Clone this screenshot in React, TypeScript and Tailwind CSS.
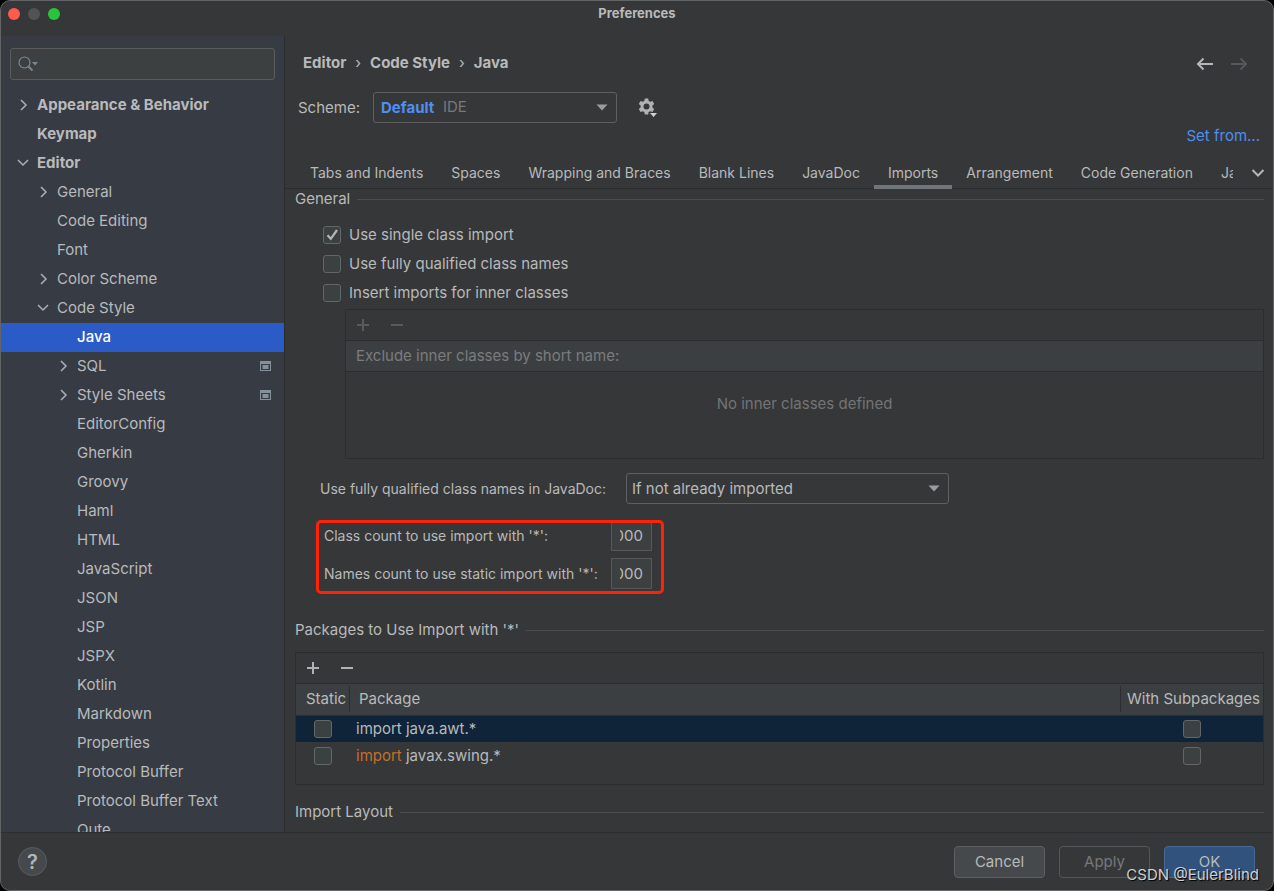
import React, { useState } from 'react';

type TreeItem = {
    title: string;
    level: 0 | 1 | 2;
    state?: 'open' | 'closed';
    project?: boolean;
}

const tree: TreeItem[] = [
    { title: 'Appearance & Behavior', level: 0, state: 'closed' },
    { title: 'Keymap', level: 0 },
    { title: 'Editor', level: 0, state: 'open' },
    { title: 'General', level: 1, state: 'closed' },
    { title: 'Code Editing', level: 1 },
    { title: 'Font', level: 1 },
    { title: 'Color Scheme', level: 1, state: 'closed' },
    { title: 'Code Style', level: 1, state: 'open' },
    { title: 'Java', level: 2 },
    { title: 'SQL', level: 2, state: 'closed', project: true },
    { title: 'Style Sheets', level: 2, state: 'closed', project: true },
    { title: 'EditorConfig', level: 2 },
    { title: 'Gherkin', level: 2 },
    { title: 'Groovy', level: 2 },
    { title: 'Haml', level: 2 },
    { title: 'HTML', level: 2 },
    { title: 'JavaScript', level: 2 },
    { title: 'JSON', level: 2 },
    { title: 'JSP', level: 2 },
    { title: 'JSPX', level: 2 },
    { title: 'Kotlin', level: 2 },
    { title: 'Markdown', level: 2 },
    { title: 'Properties', level: 2 },
    { title: 'Protocol Buffer', level: 2 },
    { title: 'Protocol Buffer Text', level: 2 },
    { title: 'Qute', level: 2 },
];

const indents = ['pl-[15px]', 'pl-[35px]', 'pl-[55px]'];

const tabs = [
    'Tabs and Indents',
    'Spaces',
    'Wrapping and Braces',
    'Blank Lines',
    'JavaDoc',
    'Imports',
    'Arrangement',
    'Code Generation',
    'Java EE Names',
];

const packages = [
    { name: 'java.awt.*', selected: true },
    { name: 'javax.swing.*', selected: false },
];

const Chevron = ({ open }: { open?: boolean }) => (
    <svg width="14" height="14" viewBox="0 0 14 14" fill="none" stroke="#adb0b3" strokeWidth="1.5">
        <path d={open ? 'M2 4 L7 9 L12 4' : 'M5 2 L10 7 L5 12'}/>
    </svg>
);

const Caret = () => (
    <svg className="pointer-events-none absolute right-[9px] top-3" width="12" height="7" viewBox="0 0 12 7">
        <path d="M0.5 0.5h11L6 6.5z" fill="#9a9da0"/>
    </svg>
);

const Plus = () => (
    <svg width="14" height="14" viewBox="0 0 14 14" fill="none" stroke="currentColor" strokeWidth="2">
        <path d="M7 1v12M1 7h12"/>
    </svg>
);

const Minus = () => (
    <svg width="14" height="14" viewBox="0 0 14 14" fill="none" stroke="currentColor" strokeWidth="2">
        <path d="M1 7h12"/>
    </svg>
);

const ProjectIcon = () => (
    <svg width="11" height="10" viewBox="0 0 11 10">
        <path d="M0 0h11v10H0zM1 3v6h9V3z" fill="#84909a" fillRule="evenodd"/>
        <path d="M2.500 4h6v4h-6z" fill="#84909a"/>
    </svg>
);

type CheckProps = { id?: string; label?: string; defaultChecked?: boolean };

const Check = ({ id, label, defaultChecked }: CheckProps) => (
    <span className="relative inline-block size-[18px] align-middle">
        <input
            id={id}
            type="checkbox"
            aria-label={label}
            defaultChecked={defaultChecked}
            className="peer block size-[18px] appearance-none rounded-[3px] border border-[#646667] bg-[#3b4141]"
        />
        <svg className="pointer-events-none absolute inset-0 hidden peer-checked:block" width="18" height="18"
             viewBox="0 0 18 18" fill="none" stroke="#b4b6b7" strokeWidth="2.2">
            <path d="M4.5 9.2 L7.8 12.8 L14 4"/>
        </svg>
    </span>
);

const SectionTitle = ({ children }: { children: React.ReactNode }) => (
    <div className="flex h-5 items-center gap-[7px]">
        <h2>{children}</h2>
        <div className="h-px flex-1 bg-[#4b4d4f]"/>
    </div>
);

const Sidebar = () => {
    const [selected, setSelected] = useState('Java');

    return (
        <aside className="flex w-[284px] shrink-0 flex-col overflow-hidden border-r border-[#292b2d] bg-[#373b44]">
            <div className="relative mx-[9px] mt-3">
                <input
                    type="text"
                    aria-label="Search settings"
                    className="block h-8 w-full rounded-[3px] border border-[#5a5c5b] bg-[#3c4040] pl-9 outline-none"
                />
                <svg className="pointer-events-none absolute left-2 top-2" width="22" height="16" viewBox="0 0 22 16"
                     fill="none" stroke="#7b8893" strokeWidth="1.2">
                    <circle cx="6.5" cy="6.5" r="5.5"/>
                    <path d="M10.5 10.5 L14.5 14.5" strokeWidth="1.8"/>
                    <path d="M14 6h6l-3 3.500z" fill="#7b8893" stroke="none"/>
                </svg>
            </div>
            <ul className="mt-[11px]">
                {tree.map((item) => (
                    <li key={item.title}>
                        <button
                            type="button"
                            onClick={() => setSelected(item.title)}
                            className={`flex h-[29px] w-full items-center pb-[2px] text-left ${indents[item.level]} ${item.level === 0 ? 'font-bold' : ''} ${item.title === selected ? 'bg-[#2a5bc7] font-medium text-white' : ''}`}>
                            <span className="flex w-[21px] shrink-0">
                                {item.state && <Chevron open={item.state === 'open'}/>}
                            </span>
                            <span className="flex-1">{item.title}</span>
                            {item.project && <span className="mr-[13px]"><ProjectIcon/></span>}
                        </button>
                    </li>
                ))}
            </ul>
        </aside>
    );
};

const Header = () => (
    <header className="shrink-0">
        <div className="flex h-[54px] items-center justify-between pl-[18px] pr-[25px]">
            <nav className="flex items-center gap-[9px] font-bold">
                <a href="#editor">Editor</a>
                <span className="font-normal">›</span>
                <a href="#code-style">Code Style</a>
                <span className="font-normal">›</span>
                <a href="#java">Java</a>
            </nav>
            <div className="flex gap-[18px] pt-[2px]">
                <button type="button" aria-label="Back" className="text-[#b4b8bb]">
                    <svg width="17" height="14" viewBox="0 0 17 14" fill="none" stroke="currentColor" strokeWidth="2">
                        <path d="M17 7H2M7.500 1.500 L2 7 L7.500 12.500"/>
                    </svg>
                </button>
                <button type="button" aria-label="Forward" disabled className="text-[#55585a]">
                    <svg width="17" height="14" viewBox="0 0 17 14" fill="none" stroke="currentColor" strokeWidth="2">
                        <path d="M0 7h15M9.500 1.500 L15 7 L9.500 12.500"/>
                    </svg>
                </button>
            </div>
        </div>
        <div className="flex h-[35px] items-center pl-[13px]">
            <label htmlFor="scheme" className="w-[75px]">Scheme:</label>
            <div className="relative">
                <select id="scheme"
                        className="block h-[31px] w-[244px] appearance-none rounded-[3px] border border-[#5e6062] bg-transparent pl-[7px] font-bold text-[#4e8ff0] outline-none">
                    <option>Default</option>
                </select>
                <span className="pointer-events-none absolute left-[70px] top-1 text-[#77797b]">IDE</span>
                <Caret/>
            </div>
            <button type="button" aria-label="Scheme actions" className="ml-[21px]">
                <svg width="20" height="20" viewBox="0 0 20 20">
                    <path
                        fill="#afb1b3" fillRule="evenodd"
                        d="M6.800 0.500h3.400l.5 2.400 1.500.9 2.300-.8 1.700 3-1.800 1.600v1.800l1.800 1.600-1.700 3-2.300-.8-1.500.9-.5 2.400H6.800l-.5-2.400-1.500-.9-2.300.8-1.700-3 1.800-1.600V7.600L.8 6l1.700-3 2.300.8 1.500-.9zM8.500 5.500a3 3 0 1 0 0 6 3 3 0 1 0 0-6z"/>
                    <path d="M11 14.500h9l-4.500 5z" fill="#d0d2d3" stroke="#363738" strokeWidth="1"/>
                </svg>
            </button>
        </div>
        <div className="flex h-[22px] items-center justify-end pr-[13px]">
            <a href="#set-from" className="text-[#4e8ff0]">Set from...</a>
        </div>
        <div className="mt-[11px] flex h-[31px] border-b border-[#2b2d2e] text-sm">
            <div role="tablist" className="flex h-[31px] min-w-0 flex-1 overflow-hidden pl-[11px]">
                {tabs.map((tab) => (
                    <button
                        key={tab}
                        type="button"
                        role="tab"
                        aria-selected={tab === 'Imports'}
                        className={`h-[31px] shrink-0 whitespace-nowrap border-b-4 px-[14px] pt-[3px] ${tab === 'Imports' ? 'border-[#6f757b]' : 'border-transparent'}`}>
                        {tab}
                    </button>
                ))}
            </div>
            <button type="button" aria-label="More tabs" className="flex w-10 items-center justify-end pr-2">
                <svg width="14" height="14" viewBox="0 0 14 14" fill="none" stroke="#b4b6b8" strokeWidth="2">
                    <path d="M1.500 4 L7 9.500 L12.500 4"/>
                </svg>
            </button>
        </div>
    </header>
);

const CountField = ({ id, label }: { id: string; label: string }) => (
    <div className="flex items-center justify-between">
        <label htmlFor={id} className="whitespace-nowrap text-sm">{label}</label>
        <input
            id={id}
            type="text"
            dir="rtl"
            defaultValue="1000"
            className="h-[31px] w-[41px] border border-[#56595a] bg-[#3c4040] px-2 outline-none"
        />
    </div>
);

const GeneralSection = () => (
    <section>
        <SectionTitle>General</SectionTitle>
        <div className="mt-[11px] ml-7">
            <div className="flex h-[29px] items-center gap-2">
                <Check id="single" defaultChecked/>
                <label htmlFor="single">Use single class import</label>
            </div>
            <div className="flex h-[29px] items-center gap-2">
                <Check id="qualified"/>
                <label htmlFor="qualified">Use fully qualified class names</label>
            </div>
            <div className="flex h-[29px] items-center gap-2">
                <Check id="inner"/>
                <label htmlFor="inner">Insert imports for inner classes</label>
            </div>
        </div>

        {/* excluded inner classes */}
        <div className="ml-[50px] mt-[2px] border border-[#2b2d2e]">
            <div className="flex h-[31px] items-center gap-5 border-b border-[#2b2d2e] pl-[10px] text-[#585a5c]">
                <button type="button" aria-label="Add class" disabled><Plus/></button>
                <button type="button" aria-label="Remove class" disabled><Minus/></button>
            </div>
            <div className="flex h-[31px] items-center border-b border-[#2b2d2e] bg-[#3c3f41] pl-[10px] text-[#7a7c7d]">
                Exclude inner classes by short name:
            </div>
            <div className="flex h-[86px] justify-center pt-[21px] text-[#727475]">No inner classes defined</div>
        </div>

        <div className="ml-[25px] mt-[14px] flex items-center">
            <label htmlFor="javadoc" className="w-[306px] whitespace-nowrap text-sm">
                Use fully qualified class names in JavaDoc:
            </label>
            <div className="relative">
                <select id="javadoc"
                        className="block h-[31px] w-[323px] appearance-none rounded-[3px] border border-[#5e6062] bg-transparent pl-[5px] outline-none">
                    <option>If not already imported</option>
                </select>
                <Caret/>
            </div>
        </div>

        {/* highlighted import limits */}
        <div className="relative ml-[21px] mt-4 flex h-[74px] w-[348px] flex-col gap-[7px] pl-2 pr-3">
            <CountField id="class-count" label="Class count to use import with '*':"/>
            <CountField id="names-count" label="Names count to use static import with '*':"/>
            <div className="pointer-events-none absolute inset-0 rounded-[5px] border-3 border-[#ff2206]"/>
        </div>
    </section>
);

const PackagesSection = () => (
    <section className="mt-[26px]">
        <SectionTitle>Packages to Use Import with '*'</SectionTitle>
        <div className="mt-3 h-[133px] border border-[#2b2d2e]">
            <div className="flex h-[31px] items-center gap-5 border-b border-[#2b2d2e] pl-[10px] text-[#afb3b5]">
                <button type="button" aria-label="Add package"><Plus/></button>
                <button type="button" aria-label="Remove package"><Minus/></button>
            </div>
            <table className="w-full table-fixed border-collapse">
                <thead>
                <tr className="h-[31px] border-b border-[#2b2d2e] bg-[#3c3f41] text-left">
                    <th className="w-[54px] p-0 font-normal">
                        <div className="border-r border-[#2b2d2e] py-[2px] pl-[10px]">Static</div>
                    </th>
                    <th className="p-0 font-normal">
                        <div className="border-r border-[#2b2d2e] py-[2px] pl-[9px]">Package</div>
                    </th>
                    <th className="w-[142px] whitespace-nowrap p-0 pl-[6px] font-normal">With Subpackages</th>
                </tr>
                </thead>
                <tbody>
                {packages.map((el) => (
                    <tr key={el.name} className={`h-[27px] ${el.selected ? 'bg-[#0f2438]' : ''}`}>
                        <td className="p-0 text-center leading-[18px]"><Check label={`Static ${el.name}`}/></td>
                        <td className="p-0 pl-[6px]">
                            <span className={el.selected ? '' : 'text-[#c46f2c]'}>import</span> {el.name}
                        </td>
                        <td className="p-0 text-center leading-[18px]"><Check label={`With subpackages ${el.name}`}/></td>
                    </tr>
                ))}
                </tbody>
            </table>
        </div>
    </section>
);

const Footer = () => (
    <footer className="flex h-[58px] shrink-0 items-center border-t border-[#2b2d2e] pl-[17px] pr-[18px]">
        <button type="button"
                className="size-[29px] rounded-full border border-[#5a5d5f] bg-[#45494b] text-xl leading-none font-semibold text-[#b4b6b7]">
            ?
        </button>
        <div className="ml-auto flex gap-[14px]">
            <button type="button" className="h-8 w-[91px] rounded-[4px] border border-[#5e6162] bg-[#45494b]">
                Cancel
            </button>
            <button type="button" disabled
                    className="h-8 w-[91px] rounded-[4px] border border-[#55585a] text-[#77797a]">
                Apply
            </button>
            <button type="button" className="h-8 w-[91px] rounded-[4px] border border-[#436b95] bg-[#31527d]">
                OK
            </button>
        </div>
    </footer>
);

export default function App() {
    return (
        <div className="h-screen bg-black">
            <div
                className="relative flex h-full flex-col overflow-hidden rounded-[10px] border border-[#626466] bg-[#363738] font-['Inter',sans-serif] text-[15px] leading-[22px] text-[#b8babb]">
                <div className="relative flex h-[35px] shrink-0 items-start justify-center pt-px">
                    <div className="absolute left-[7px] top-[7px] flex gap-2">
                        <span className="size-3 rounded-full bg-[#ff5a50]"/>
                        <span className="size-3 rounded-full bg-[#525355]"/>
                        <span className="size-3 rounded-full bg-[#28c53c]"/>
                    </div>
                    <h1 className="text-[13px] font-bold">Preferences</h1>
                </div>
                <div className="flex min-h-0 flex-1">
                    <Sidebar/>
                    <main className="flex min-w-0 flex-1 flex-col">
                        <Header/>
                        <div className="min-h-0 flex-1 overflow-hidden pl-[10px] pr-[9px]">
                            <GeneralSection/>
                            <PackagesSection/>
                            <section className="mt-[17px]">
                                <SectionTitle>Import Layout</SectionTitle>
                            </section>
                        </div>
                    </main>
                </div>
                <Footer/>
                <div className="pointer-events-none absolute bottom-1 right-[14px] text-[#d0d2d4] [text-shadow:1px_1px_1px_#000]">
                    CSDN @EulerBlind
                </div>
            </div>
        </div>
    );
}
